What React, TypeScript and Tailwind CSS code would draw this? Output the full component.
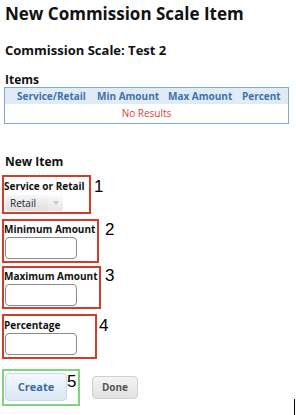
import React from 'react';

// Annotated form screenshot: "New Commission Scale Item"
const columns = [
  { label: 'Service/Retail', w: 'w-[80px]' },
  { label: 'Min Amount', w: 'w-[71px]' },
  { label: 'Max Amount', w: 'w-[74px]' },
  { label: 'Percent', w: 'w-[46px]' },
];

const Num = ({ n, cls }: { n: string; cls: string }) => (
  <span className={`font-['Liberation_Sans',Arial,sans-serif] text-[17px] leading-[17px] text-black ${cls}`}>{n}</span>
);

const TextInput = () => (
  <input
    type="text"
    className="block w-[72px] h-[22px] rounded-[4px] border border-[#8a8a8a] bg-white outline-none"
  />
);

export default function App() {
  return (
    <div className="min-h-[415px] w-[296px] bg-white font-['Open_Sans',sans-serif] text-[#111]">
      <h1 className="ml-[5px] pt-[3px] text-[17px] leading-[22px] font-bold">New Commission Scale Item</h1>
      <h2 className="ml-[5px] mt-[17px] text-[13px] leading-[16px] font-bold">Commission Scale: Test 2</h2>
      <h3 className="ml-[5px] mt-[14px] text-[12px] leading-[15px] font-bold">Items</h3>

      <div className="ml-[4px] w-[285px] border border-[#7fa9d1]">
        <div className="flex h-[16px] items-center bg-[#e0ebf6] pl-[12px] text-[10px] font-bold text-[#3c73ad]">
          {columns.map((c) => (
            <span key={c.label} className={`${c.w} whitespace-nowrap`}>{c.label}</span>
          ))}
        </div>
        <div className="flex h-[19px] items-center justify-center text-[10px] text-[#d6453b]">No Results</div>
      </div>

      <h3 className="ml-[5px] mt-[30px] text-[12px] leading-[16px] font-bold">New Item</h3>

      <div className="ml-[2px] mt-[5px] flex flex-col">
        {/* 1 */}
        <div className="flex items-start">
          <div className="h-[39px] w-[89px] border-2 border-[#d23c2c]">
            <div className="pt-[2px] text-[10px] leading-[14px] font-bold whitespace-nowrap">Service or Retail</div>
            <div className="ml-[1px] mt-[2px] flex h-[16px] w-[58px] items-center rounded-[3px] bg-gradient-to-b from-[#f7f7f7] to-[#dedede] text-[10px] text-[#222]">
              <span className="pl-[5px] w-[43px]">Retail</span>
              <span className="flex h-full flex-1 items-center justify-center rounded-r-[3px] bg-gradient-to-b from-[#fafafa] to-[#e6e6e6]">
                <svg width="6" height="4" viewBox="0 0 6 4"><path d="M0 0h6L3 4z" fill="#c8c8c8" /></svg>
              </span>
            </div>
          </div>
          <Num n="1" cls="ml-[3px] mt-[3px]" />
        </div>

        {/* 2 */}
        <div className="mt-[5px] flex items-start">
          <div className="h-[44px] w-[97px] border-2 border-[#d23c2c]">
            <div className="pt-[1px] text-[10px] leading-[14px] font-bold whitespace-nowrap">Minimum Amount</div>
            <div className="ml-[1px] mt-[1px]"><TextInput /></div>
          </div>
          <Num n="2" cls="ml-[6px] mt-[2px]" />
        </div>

        {/* 3 */}
        <div className="mt-[3px] flex items-start">
          <div className="h-[43px] w-[99px] border-2 border-[#d23c2c]">
            <div className="pt-[1px] text-[10px] leading-[14px] font-bold whitespace-nowrap">Maximum Amount</div>
            <div className="ml-[1px] mt-[1px]"><TextInput /></div>
          </div>
          <Num n="3" cls="ml-[4px] mt-[1px]" />
        </div>

        {/* 4 */}
        <div className="mt-[5px] flex items-start">
          <div className="h-[45px] w-[95px] border-2 border-[#d23c2c]">
            <div className="pt-[2px] text-[10px] leading-[14px] font-bold whitespace-nowrap">Percentage</div>
            <div className="ml-[1px] mt-[1px]"><TextInput /></div>
          </div>
          <Num n="4" cls="ml-[2px] mt-[3px]" />
        </div>

        {/* 5 + buttons */}
        <div className="mt-[10px] flex items-start">
          <div className="flex h-[37px] w-[78px] items-start border-2 border-[#7fd67a] pl-[1px] pt-[2px]">
            <button className="h-[28px] w-[62px] rounded-[4px] border border-[#c9d9ec] bg-gradient-to-b from-[#f3f8fd] to-[#dbe7f5] text-[11px] font-bold text-[#3a6ca2]">
              Create
            </button>
            <Num n="5" cls="mt-[0px]" />
          </div>
          <button className="ml-[12px] mt-[7px] h-[23px] w-[46px] rounded-[4px] border border-[#cfcfcf] bg-gradient-to-b from-[#f4f4f4] to-[#e2e2e2] text-[10px] font-bold text-[#555]">
            Done
          </button>
          <span className="ml-auto mr-[1px] mt-[30px] h-[17px] w-px bg-black" />
        </div>
      </div>
    </div>
  );
}
